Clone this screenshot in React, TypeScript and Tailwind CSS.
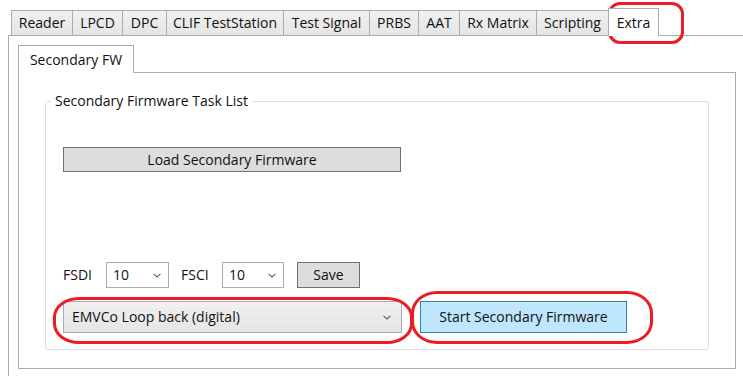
import React from 'react';

const tabs = [
  { label: 'Reader', w: 'w-[62px]' },
  { label: 'LPCD', w: 'w-[51px]' },
  { label: 'DPC', w: 'w-[45px]' },
  { label: 'CLIF TestStation', w: 'w-[118px]' },
  { label: 'Test Signal', w: 'w-[87px]' },
  { label: 'PRBS', w: 'w-[50px]' },
  { label: 'AAT', w: 'w-[42px]' },
  { label: 'Rx Matrix', w: 'w-[78px]' },
  { label: 'Scripting', w: 'w-[73px]' },
];

function Chevron() {
  return (
    <svg width="8" height="5" viewBox="0 0 8 5" className="shrink-0">
      <path d="M0.5 0.8 L4 4 L7.5 0.8" fill="none" stroke="#606060" strokeWidth="1.1" />
    </svg>
  );
}

function SmallCombo({ value, w }: { value: string; w: string }) {
  return (
    <div className={`${w} h-[26px] border border-[#acacac] bg-white flex items-center justify-between pl-[6px] pr-[7px]`}>
      <span>{value}</span>
      <Chevron />
    </div>
  );
}

export default function App() {
  return (
    <div className="relative w-[743px] h-[376px] overflow-hidden bg-white text-[14px] leading-[20px] text-[#111] font-['Open_Sans',sans-serif]">
      <div className="pl-[8px] pt-[8px]">
        {/* main tab strip */}
        <div className="flex items-end h-[27px] pl-[3px]">
          {tabs.map((t, i) => (
            <div
              key={t.label}
              className={`${t.w} ${i > 0 ? '-ml-px' : ''} h-[25px] flex items-center justify-center border-t border-l border-r border-[#acacac] bg-gradient-to-b from-[#f0f0f0] to-[#e5e5e5]`}
            >
              {t.label}
            </div>
          ))}
          <div className="relative z-10 -ml-px w-[51px] h-[28px] -mb-px flex items-center justify-center border-t border-l border-r border-[#acacac] bg-white">
            Extra
          </div>
        </div>

        {/* main panel */}
        <div className="w-[760px] h-[400px] border-t border-l border-[#acacac] pt-[9px] pl-[9px]">
          {/* inner tab strip */}
          <div className="flex items-end h-[27px]">
            <div className="relative z-10 w-[116px] h-[28px] -mb-px flex items-center justify-center border-t border-l border-r border-[#acacac] bg-white">
              Secondary FW
            </div>
          </div>

          {/* inner panel */}
          <div className="w-[718px] h-[297px] border border-[#acacac] bg-white pt-[18px] pl-[26px]">
            <fieldset className="w-[664px] h-[259px] border border-[#d5dfe5] rounded-[3px]">
              <legend className="ml-[5px] px-[4px]">Secondary Firmware Task List</legend>
              <div className="pl-[17px] pt-[36px] flex flex-col">
                <button className="w-[338px] h-[25px] border border-[#707070] bg-[#dddddd] flex items-center justify-center">
                  Load Secondary Firmware
                </button>

                <div className="mt-[90px] flex items-center">
                  <span className="w-[43px]">FSDI</span>
                  <SmallCombo value="10" w="w-[63px]" />
                  <span className="ml-[12px] w-[41px]">FSCI</span>
                  <SmallCombo value="10" w="w-[62px]" />
                  <button className="ml-[13px] w-[63px] h-[26px] border border-[#707070] bg-[#dddddd] flex items-center justify-center">
                    Save
                  </button>
                </div>

                <div className="mt-[13px] flex items-center">
                  <div className="w-[339px] h-[32px] border border-[#acacac] bg-gradient-to-b from-[#f0f0f0] to-[#e5e5e5] flex items-center justify-between pl-[8px] pr-[10px]">
                    <span>EMVCo Loop back (digital)</span>
                    <Chevron />
                  </div>
                  <button className="ml-[18px] w-[207px] h-[32px] border border-[#3c7fb1] bg-[#bee6fd] flex items-center justify-center">
                    Start Secondary Firmware
                  </button>
                </div>
              </div>
            </fieldset>
          </div>
        </div>
      </div>

      {/* red annotations */}
      <div className="absolute left-[608px] top-[2px] w-[76px] h-[42px] border-[3px] border-[#ed1c24] rounded-[12px] pointer-events-none" />
      <div className="absolute left-[53px] top-[297px] w-[360px] h-[47px] border-[3px] border-[#ed1c24] rounded-[26px/20px] pointer-events-none" />
      <div className="absolute left-[411px] top-[291px] w-[242px] h-[53px] border-[3px] border-[#ed1c24] rounded-[26px/22px] pointer-events-none" />
    </div>
  );
}
